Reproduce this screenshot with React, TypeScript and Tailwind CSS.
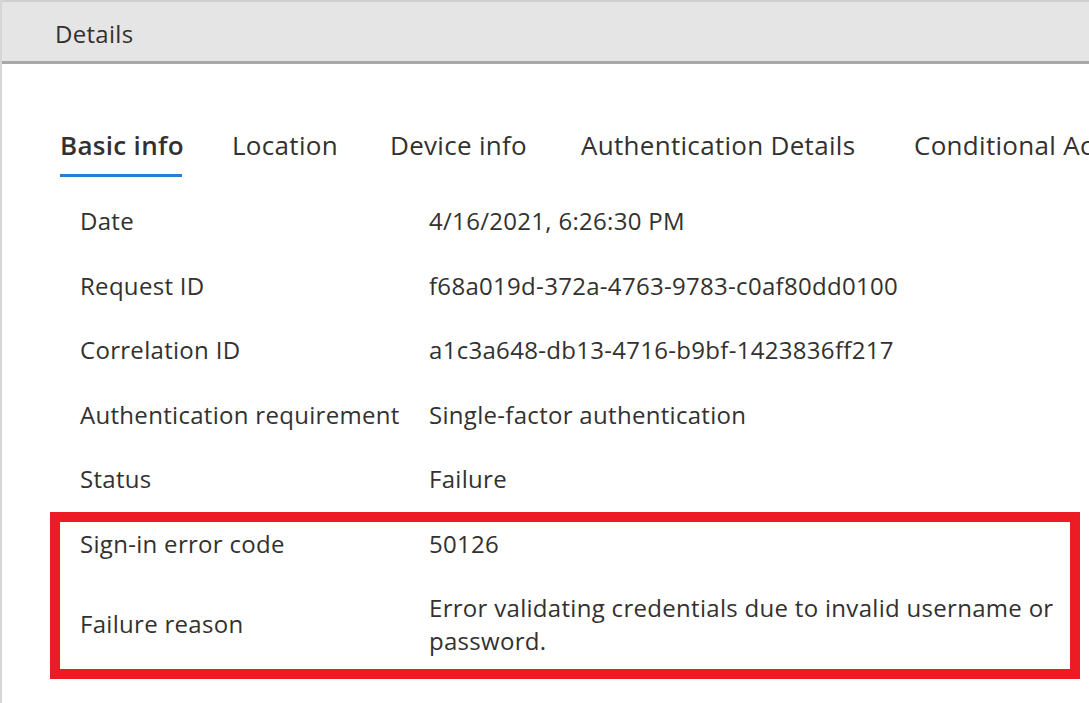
const rows = [
  { label: "Date", value: "4/16/2021, 6:26:30 PM" },
  { label: "Request ID", value: "f68a019d-372a-4763-9783-c0af80dd0100" },
  { label: "Correlation ID", value: "a1c3a648-db13-4716-b9bf-1423836ff217" },
  { label: "Authentication requirement", value: "Single-factor authentication" },
  { label: "Status", value: "Failure" },
];

const tabs = [
  { name: "Basic info", w: "w-[172px]" },
  { name: "Location", w: "w-[158px]" },
  { name: "Device info", w: "w-[191px]" },
  { name: "Authentication Details", w: "w-[333px]" },
  { name: "Conditional Access", w: "w-[300px]" },
];

export default function App() {
  return (
    <div
      className="w-[1089px] h-[703px] overflow-hidden bg-white border-l-2 border-[#d6d6d6] text-[#323130]"
      style={{ fontFamily: '"Open Sans", "Noto Sans", sans-serif' }}
    >
      {/* Header bar */}
      <div className="h-[64px] bg-[#e5e5e5] border-t-2 border-[#cfcfcf] border-b-[3px] border-b-[#a8a8a8] flex items-center pl-[53px] pt-[4px] text-[24px] tracking-[0.3px]">
        Details
      </div>

      {/* Tabs */}
      <div className="flex pl-[58px] mt-[63px] whitespace-nowrap">
        {tabs.map((t, i) => (
          <div key={t.name} className={`${t.w} shrink-0 flex flex-col items-start`}>
            <span
              className={`text-[26px] leading-[36px] tracking-[0.3px] ${i === 0 ? "font-semibold" : ""}`}
            >
              {t.name}
            </span>
            <div className={`h-[3px] mt-[11px] w-full ${i === 0 ? "bg-[#2b7cd3]" : "bg-transparent"}`} style={i === 0 ? { width: 122 } : undefined} />
          </div>
        ))}
      </div>

      {/* Rows */}
      <div className="text-[24px] tracking-[0.3px] mt-[12px]">
        {rows.map((r) => (
          <div key={r.label} className="flex h-[64.5px] items-center pl-[78px] whitespace-nowrap">
            <div className="w-[349px]">{r.label}</div>
            <div>{r.value}</div>
          </div>
        ))}

        <div className="ml-[48px] w-[1030px] border-[10px] border-[#ed1c24] pl-[20px] pr-[10px]">
          <div className="flex h-[44px] items-center">
            <div className="w-[349px]">Sign-in error code</div>
            <div>50126</div>
          </div>
          <div className="flex items-center pt-[25.5px] pb-[11.5px]">
            <div className="w-[349px] shrink-0">Failure reason</div>
            <div className="leading-[33px] w-[640px]">
              Error validating credentials due to invalid username or password.
            </div>
          </div>
        </div>
      </div>
    </div>
  );
}
